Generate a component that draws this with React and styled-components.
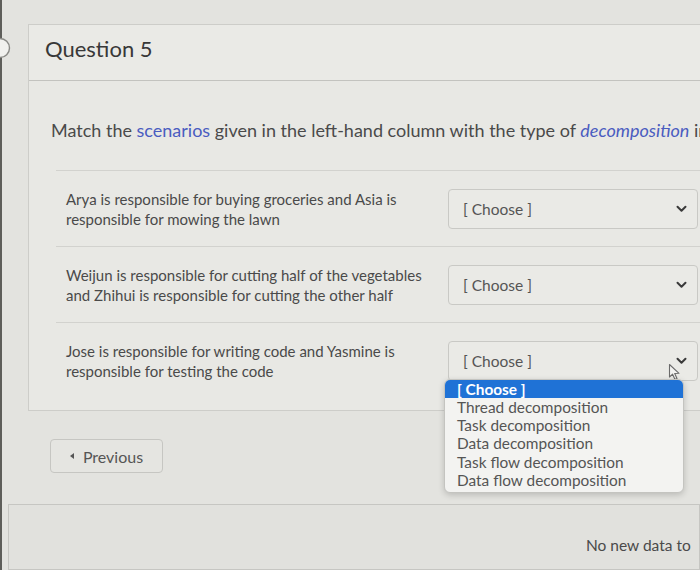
import styled, { createGlobalStyle } from "styled-components";

const Global = createGlobalStyle`
  html, body {
    margin: 0;
    padding: 0;
    background: #e3e3df;
    overflow: hidden;
  }
  body {
    font-family: Lato, "Open Sans", sans-serif;
    color: #4a4a4a;
  }
`

const rows = [
  "Arya is responsible for buying groceries and Asia is responsible for mowing the lawn",
  "Weijun is responsible for cutting half of the vegetables and Zhihui is responsible for cutting the other half",
  "Jose is responsible for writing code and Yasmine is responsible for testing the code",
]

const options = [
  "Thread decomposition",
  "Task decomposition",
  "Data decomposition",
  "Task flow decomposition",
  "Data flow decomposition",
]

function Chevron() {
  return (
    <svg width="11" height="8" viewBox="0 0 11 8">
      <path d="M1.5 1.8 L5.5 5.8 L9.5 1.8" fill="none" stroke="#3a3a3a" strokeWidth="2" strokeLinecap="round" strokeLinejoin="round" />
    </svg>
  )
}

function Pointer() {
  return (
    <svg width="14" height="18" viewBox="0 0 14 18">
      <path d="M1.5 1.5 L1.5 14 L4.6 11.2 L7 16.5 L9 15.6 L6.7 10.5 L11 10.3 Z" fill="#f3f3f1" stroke="#6a6a6a" strokeWidth="1.1" strokeLinejoin="round" />
    </svg>
  )
}

export default function App() {
  return (
    <>
      <Global />
      <Page>
        <Rail>
          <RailBadge>
            <svg width="12" height="22" viewBox="0 0 12 22">
              <circle cx="0" cy="11" r="9.5" fill="#f1f1ee" stroke="#8a8a86" strokeWidth="1.4" />
            </svg>
          </RailBadge>
        </Rail>
        <Main>
          <Card>
            <CardHeader>Question 5</CardHeader>
            <CardBody>
              <Prompt>
                Match the <Link>scenarios</Link> given in the left-hand column with the type of{" "}
                <Link $italic>decomposition</Link> in
              </Prompt>
              <Answers>
                {rows.map((text, i) => (
                  <Row key={i} $last={i === rows.length - 1}>
                    <Scenario>{text}</Scenario>
                    <SelectWrap>
                      <Select>
                        <span>[ Choose ]</span>
                        <Chevron />
                      </Select>
                      {i === rows.length - 1 && (
                        <>
                          <Cursor><Pointer /></Cursor>
                          <Menu>
                            <MenuItem $active>[ Choose ]</MenuItem>
                            {options.map((o) => (
                              <MenuItem key={o}>{o}</MenuItem>
                            ))}
                          </Menu>
                        </>
                      )}
                    </SelectWrap>
                  </Row>
                ))}
              </Answers>
            </CardBody>
          </Card>
          <PrevButton>
            <Tri />
            Previous
          </PrevButton>
          <Footer>
            <FooterText>No new data to</FooterText>
          </Footer>
        </Main>
      </Page>
    </>
  )
}

const Page = styled.div`
  display: flex;
  width: 700px;
  height: 570px;
  overflow: hidden;
`
const Rail = styled.div`
  position: relative;
  width: 2px;
  flex-shrink: 0;
  background: #5e5e5a;
`
const RailBadge = styled.div`
  position: absolute;
  top: 37px;
  left: 0;
`
const Main = styled.div`
  flex: 1;
  display: flex;
  flex-direction: column;
  padding-top: 24px;
  min-width: 0;
`
const Card = styled.div`
  margin-left: 26px;
  width: 760px;
  border: 1px solid #cdcdc9;
  background: #e8e8e4;
`
const CardHeader = styled.div`
  height: 56px;
  box-sizing: border-box;
  display: flex;
  align-items: center;
  padding: 0 0 8px 16px;
  background: #eaeae6;
  border-bottom: 1px solid #c3c3bf;
  font-size: 22px;
  color: #383838;
`
const CardBody = styled.div`
  padding: 37px 0 0 22px;
`
const Prompt = styled.p`
  margin: 0;
  font-size: 18px;
  line-height: 24px;
  color: #4a4a4a;
  white-space: nowrap;
`
const Link = styled.span`
  color: #4a5cc0;
  font-style: ${(p) => (p.$italic ? "italic" : "normal")};
`
const Answers = styled.div`
  margin: 28px 0 0 5px;
  border-top: 1px solid #d2d2ce;
  padding-bottom: 12px;
`
const Row = styled.div`
  display: flex;
  align-items: center;
  height: 75px;
  padding-left: 10px;
  border-bottom: ${(p) => (p.$last ? "none" : "1px solid #d2d2ce")};
`
const Scenario = styled.div`
  width: 366px;
  margin-right: 16px;
  font-size: 15px;
  line-height: 20px;
  color: #4a4a4a;
`
const SelectWrap = styled.div`
  position: relative;
`
const Select = styled.div`
  width: 250px;
  height: 40px;
  box-sizing: border-box;
  display: flex;
  align-items: center;
  justify-content: space-between;
  padding: 0 10px 0 14px;
  border: 1px solid #c9c9c5;
  border-radius: 4px;
  background: #eaeae6;
  font-size: 15.5px;
  color: #555;
`
const Cursor = styled.div`
  position: absolute;
  top: 22px;
  left: 220px;
`
const Menu = styled.div`
  position: absolute;
  top: 38px;
  left: -4px;
  width: 238px;
  padding-bottom: 3px;
  background: #f3f3f1;
  border: 1px solid #c4c4c0;
  border-radius: 6px;
  box-shadow: 0 2px 6px rgba(0, 0, 0, 0.18);
  overflow: hidden;
  z-index: 2;
`
const MenuItem = styled.div`
  height: 18.3px;
  line-height: 18px;
  padding-left: 12px;
  font-size: 15.4px;
  white-space: nowrap;
  color: ${(p) => (p.$active ? "#ffffff" : "#555")};
  background: ${(p) => (p.$active ? "#1f72d6" : "transparent")};
  font-weight: ${(p) => (p.$active ? 700 : 400)};
`
const PrevButton = styled.div`
  margin: 28px 0 0 48px;
  width: 113px;
  height: 38px;
  box-sizing: border-box;
  display: flex;
  align-items: center;
  justify-content: center;
  gap: 9px;
  border: 1px solid #c6c6c2;
  border-radius: 4px;
  background: #e5e5e1;
  font-size: 16px;
  color: #555;
`
const Tri = styled.span`
  width: 0;
  height: 0;
  border-top: 3px solid transparent;
  border-bottom: 3px solid transparent;
  border-right: 4px solid #555;
`
const Footer = styled.div`
  margin: 31px 0 0 6px;
  height: 70px;
  box-sizing: border-box;
  display: flex;
  justify-content: flex-start;
  padding: 31px 0 0 577px;
  border: 1px solid #c6c6c2;
  background: #e1e1dd;
`
const FooterText = styled.div`
  font-size: 15.5px;
  color: #4a4a4a;
  white-space: nowrap;
`
